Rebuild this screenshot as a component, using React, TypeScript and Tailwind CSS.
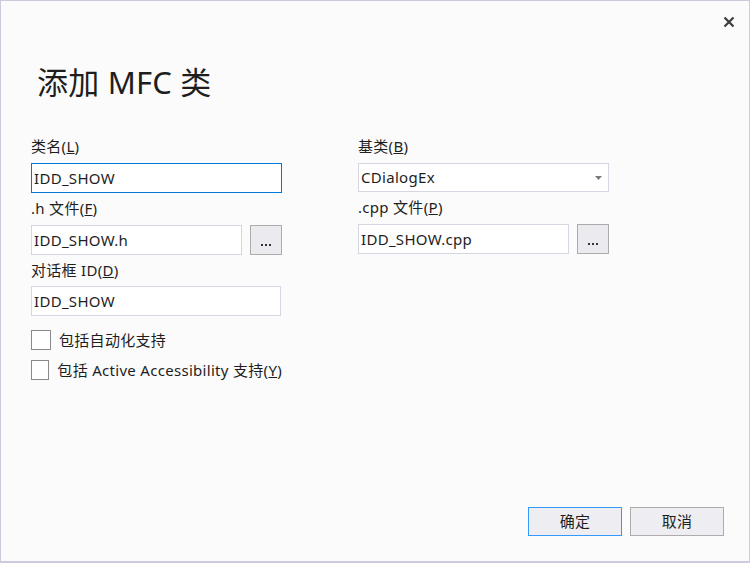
import React from "react";

const font = { fontFamily: '"Noto Sans", "Noto Sans CJK SC", sans-serif' };

function Label({ children }: { children: React.ReactNode }) {
  return <div className="h-[20px] leading-[20px] text-[15px] text-[#1e1e1e] whitespace-nowrap">{children}</div>;
}

function Input({ value, focused, className }: { value: string; focused?: boolean; className?: string }) {
  return (
    <div
      className={`h-[30px] flex items-center pl-[2px] text-[15px] text-[#1e1e1e] bg-white border ${
        focused ? "border-[#0078d7]" : "border-[#d6d6e2]"
      } ${className ?? ""}`}
    >
      {value}
    </div>
  );
}

function Browse() {
  return (
    <div className="w-[32px] h-[30px] bg-[#ebebef] border border-[#acacac] flex items-end justify-center pb-[8px]">
      <div className="flex gap-[2px]">
        <div className="w-[2px] h-[2px] bg-[#333]" />
        <div className="w-[2px] h-[2px] bg-[#333]" />
        <div className="w-[2px] h-[2px] bg-[#333]" />
      </div>
    </div>
  );
}

function Check({ children }: { children: React.ReactNode }) {
  return (
    <div className="flex items-center h-[20px]">
      <div className="w-[20px] h-[20px] border border-[#8a8a8a] bg-white" />
      <div className="ml-[8px] text-[15px] text-[#1e1e1e] whitespace-nowrap">{children}</div>
    </div>
  );
}

export default function App() {
  return (
    <div
      style={font}
      className="relative w-[750px] h-[563px] bg-[#fbfbfb] border border-[#cbcbdf] border-b-2 flex flex-col tracking-[0.3px]"
    >
      <button className="absolute right-[13px] top-[14px] w-[14px] h-[14px] flex items-center justify-center">
        <svg width="12" height="12" viewBox="0 0 12 12">
          <path d="M1.5 1.5 L10.5 10.5 M10.5 1.5 L1.5 10.5" stroke="#3c3c3c" strokeWidth="2.2" strokeLinecap="butt" />
        </svg>
      </button>
      <div className="mt-[61px] ml-[36px] h-[40px] leading-[40px] text-[31px] tracking-[0.2px] text-[#1e1e1e]">
        添加 MFC 类
      </div>
      <div className="mt-[34px] ml-[30px] flex gap-[76px]">
        <div className="w-[251px] flex flex-col">
          <Label>
            类名(<span className="underline">L</span>)
          </Label>
          <Input value="IDD_SHOW" focused className="mt-[7px] h-[29px]" />
          <div className="mt-[5px]">
            <Label>
              .h 文件(<span className="underline">F</span>)
            </Label>
          </div>
          <div className="mt-[7px] flex gap-[8px]">
            <Input value="IDD_SHOW.h" className="flex-1" />
            <Browse />
          </div>
          <div className="mt-[5px]">
            <Label>
              对话框 ID(<span className="underline">D</span>)
            </Label>
          </div>
          <Input value="IDD_SHOW" className="mt-[6px] w-[250px]" />
          <div className="mt-[14px] flex flex-col gap-[10px]">
            <Check>包括自动化支持</Check>
            <Check>
              包括 Active Accessibility 支持(<span className="underline">Y</span>)
            </Check>
          </div>
        </div>
        <div className="w-[251px] flex flex-col">
          <Label>
            基类(<span className="underline">B</span>)
          </Label>
          <div className="mt-[7px] h-[29px] flex items-center justify-between pl-[2px] pr-[6px] text-[15px] text-[#1e1e1e] bg-white border border-[#d6d6e2]">
            <span>CDialogEx</span>
            <svg width="7" height="4" viewBox="0 0 7 4">
              <path d="M0 0 L7 0 L3.5 4 Z" fill="#7a7a7a" />
            </svg>
          </div>
          <div className="mt-[5px]">
            <Label>
              .cpp 文件(<span className="underline">P</span>)
            </Label>
          </div>
          <div className="mt-[7px] flex gap-[8px]">
            <Input value="IDD_SHOW.cpp" className="flex-1" />
            <Browse />
          </div>
        </div>
      </div>
      <div className="mt-auto mb-[25px] mr-[25px] flex justify-end gap-[8px]">
        <button className="w-[94px] h-[29px] bg-[#eeeef2] border border-[#3399ff] text-[15px] text-[#1e1e1e]">确定</button>
        <button className="w-[94px] h-[29px] bg-[#eeeef2] border border-[#acacac] text-[15px] text-[#1e1e1e]">取消</button>
      </div>
    </div>
  );
}
